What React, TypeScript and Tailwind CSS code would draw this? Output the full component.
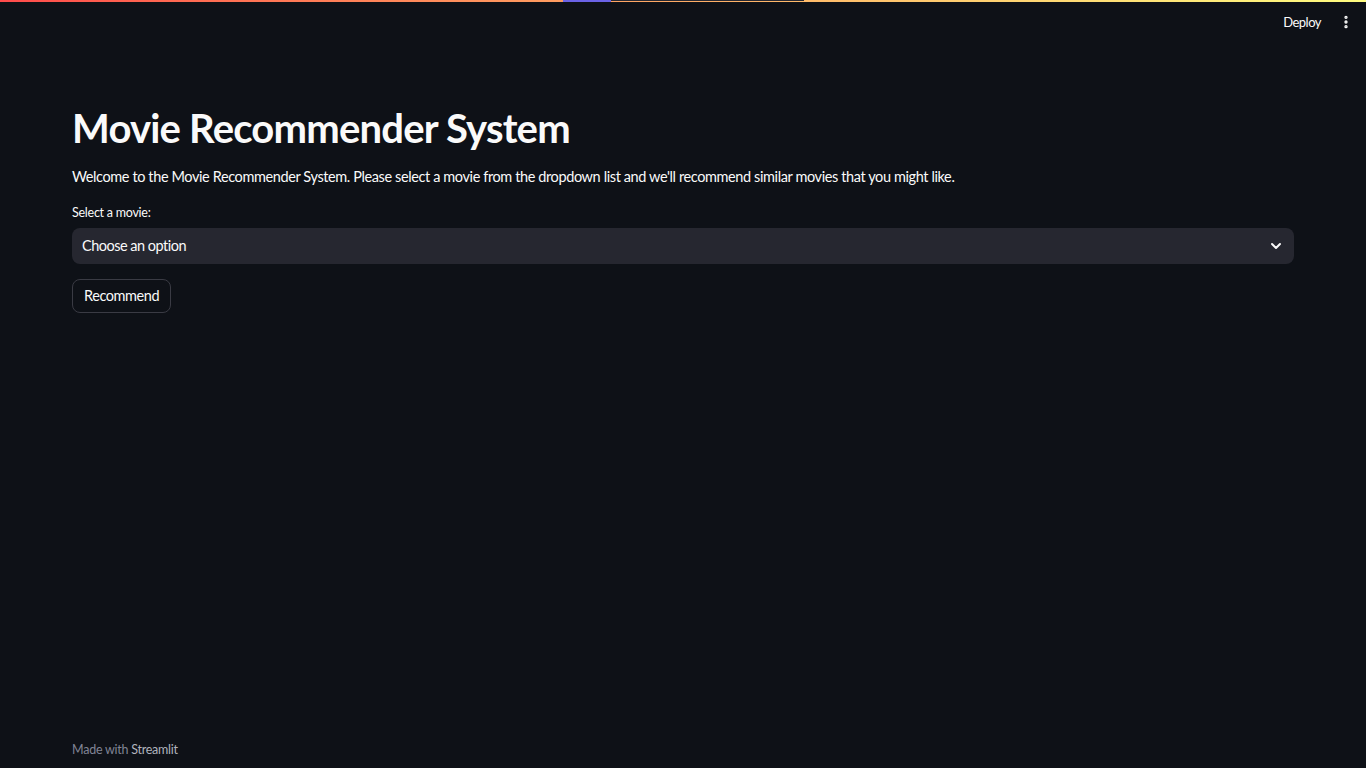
import { ChevronDown, EllipsisVertical } from "lucide-react";

export default function App() {
  return (
    <div className="relative flex min-h-screen flex-col bg-[#0e1117] font-['Lato','Noto_Sans',sans-serif] text-[#fafafa]">
      {/* Top decoration bar */}
      <div className="relative h-[2px] w-full bg-gradient-to-r from-[#ff4b4b] to-[#fffd80]">
        <div className="absolute left-[563px] top-0 h-[2px] w-[48px] bg-[#6b63e6]" />
        <div className="absolute left-[611px] top-0 h-[1px] w-[193px] bg-[#262730]" />
      </div>

      {/* Header */}
      <header className="flex h-[40px] items-center justify-end gap-[17px] pr-[12px]">
        <button className="text-[13px] leading-none tracking-[-0.04em] text-[#fafafa]">Deploy</button>
        <EllipsisVertical className="h-4 w-4" strokeWidth={3} />
      </header>

      {/* Main content */}
      <main className="flex flex-1 flex-col px-[72px] pt-[62px]">
        <h1 className="text-[40px] font-bold leading-[48px] tracking-[-0.02em]">
          Movie Recommender System
        </h1>
        <p className="mt-[13px] text-[14.5px] leading-[24px] tracking-[-0.027em]">
          Welcome to the Movie Recommender System. Please select a movie from the dropdown list and we'll recommend similar movies that you might like.
        </p>
        <label className="mt-[14px] text-[12.5px] leading-[20px] tracking-[-0.02em]">Select a movie:</label>
        <div className="mt-[5px] flex h-[36px] items-center justify-between rounded-lg bg-[#262730] pl-[10px] pr-[10px]">
          <span className="text-[14.5px] tracking-[-0.035em]">Choose an option</span>
          <ChevronDown className="h-4 w-4" strokeWidth={3} />
        </div>
        <div className="mt-[15px]">
          <button className="h-[34px] rounded-lg border border-[#3a3b44] bg-[#0e1117] px-[11px] text-[14.5px] tracking-[-0.03em]">
            Recommend
          </button>
        </div>
        <div className="flex-1" />
        <footer className="pb-[8px] text-[12.5px] tracking-[-0.02em] text-[#808495]">
          Made with <span className="text-[#b0b3bd]">Streamlit</span>
        </footer>
      </main>
    </div>
  );
}
